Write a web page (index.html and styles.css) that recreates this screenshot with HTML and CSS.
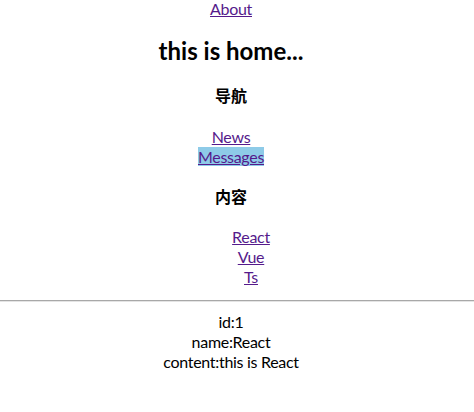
FILE: index.html
```html
<!DOCTYPE html>
<html>
<head>
<meta charset="utf-8">
<link rel="stylesheet" href="styles.css">
</head>
<body>
<div class="app">
  <div class="top"><a href="#" class="link">About</a></div>
  <h2 class="title">this is home...</h2>
  <h4 class="heading">导航</h4>
  <div class="nav">
    <div><a href="#" class="link">News</a></div>
    <div><a href="#" class="link active">Messages</a></div>
  </div>
  <h4 class="heading">内容</h4>
  <ul class="list">
    <li><a href="#" class="link">React</a></li>
    <li><a href="#" class="link">Vue</a></li>
    <li><a href="#" class="link">Ts</a></li>
  </ul>
  <hr class="rule">
  <div class="detail">
    <div>id:1</div>
    <div>name:React</div>
    <div>content:this is React</div>
  </div>
</div>
</body>
</html>
```

FILE: styles.css
```css
html, body {
  margin: 0;
  padding: 0;
  background: #ffffff;
}
body {
  font-family: Lato, "Noto Sans CJK SC", sans-serif;
  font-size: 16px;
  line-height: 20px;
  letter-spacing: -0.3px;
  color: #000000;
  overflow: hidden;
}
.app {
  width: 462px;
  text-align: center;
}
.link {
  color: #551a8b;
  text-decoration: underline;
}
.active {
  background: #8ecbe8;
}
.top {
  margin-top: -1px;
}
.title {
  margin: 17px 0 0;
  font-size: 24px;
  line-height: 30px;
  font-weight: 700;
  letter-spacing: 0;
}
.heading {
  margin: 20px 0 0;
  font-size: 16px;
  line-height: 20px;
  font-weight: 700;
  letter-spacing: 0;
}
.nav {
  margin-top: 21px;
}
.list {
  list-style: none;
  margin: 20px 0 0;
  padding-left: 40px;
}
.rule {
  margin: 13px -12px 0 0;
  height: 0;
  border: none;
  border-top: 1px solid #a8a8a8;
  border-bottom: 1px solid #e4e4e4;
}
.detail {
  margin-top: 10px;
}
```
